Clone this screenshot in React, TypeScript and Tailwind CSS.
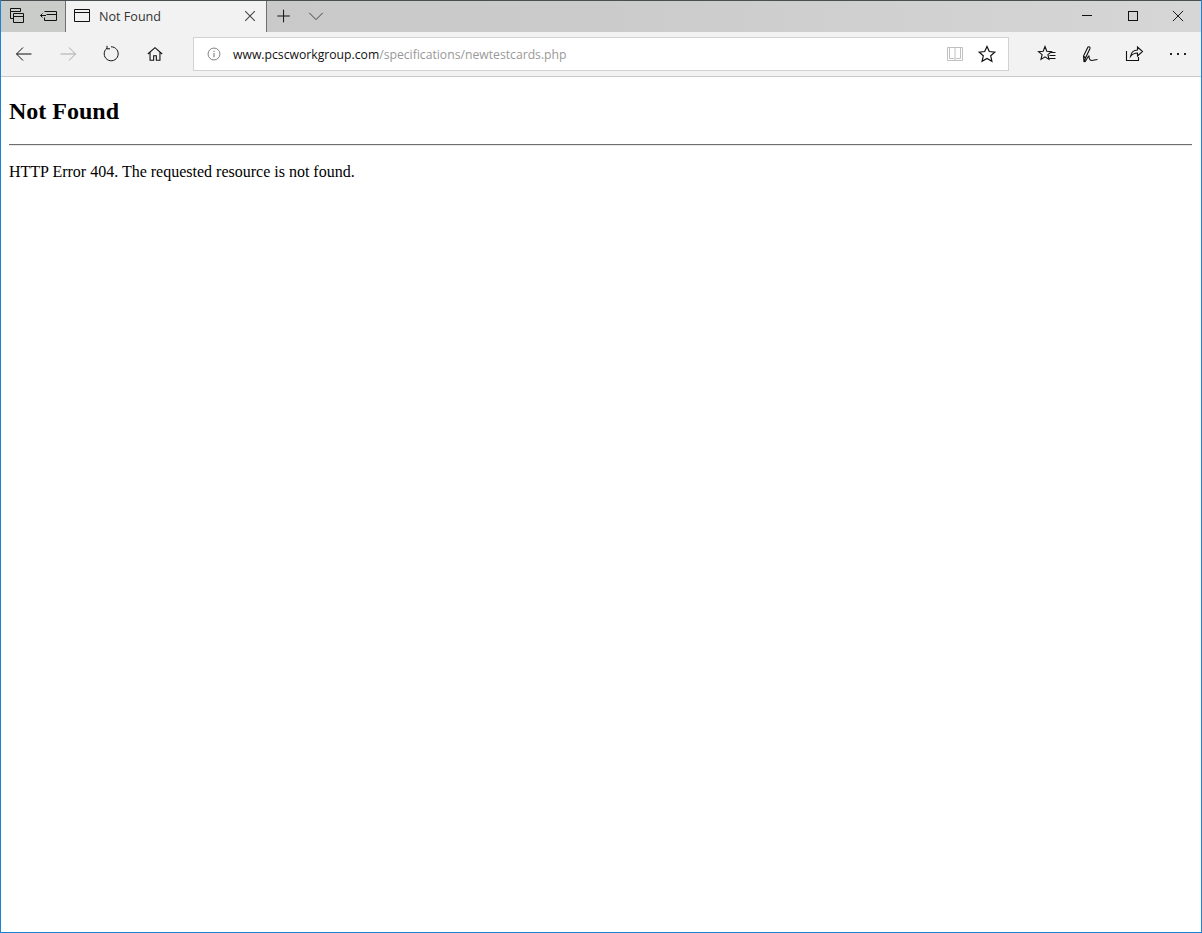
import type { ReactNode } from "react";

const Icon = ({ children, size = 20 }: { children: ReactNode; size?: number }) => (
  <svg width={size} height={size} viewBox="0 0 20 20" fill="none" stroke="currentColor" strokeWidth="1" className="block">
    {children}
  </svg>
);

const ToolButton = ({ className, children }: { className: string; children: ReactNode }) => (
  <div className={`flex h-[44px] items-center justify-center ${className}`}>{children}</div>
);

export default function App() {
  return (
    <div className="flex h-[933px] w-[1202px] flex-col overflow-hidden border-x border-b border-x-[#1883d7] border-b-[#1883d7] bg-white font-['Open_Sans',sans-serif]">
      <div className="h-px -mx-px shrink-0 bg-[#4a4f52]" />

      {/* Tab strip */}
      <div className="flex h-[31px] shrink-0 bg-gradient-to-r from-[#c8c8c8] via-[#cbcbcb] to-[#d6d6d6] text-[#111]">
        <div className="flex w-[64px] shrink-0 bg-[#c9ccc9] pb-[2px]">
          <div className="flex w-[31px] items-center justify-center">
            <Icon>
              <path d="M3.5 2.5h10v3h-10zM3.5 5.5v7h3M6.5 7.5h10v9h-10zM6.5 10.5h10" />
            </Icon>
          </div>
          <div className="flex w-[33px] items-center justify-center">
            <Icon>
              <path d="M5.5 5.5h12v9h-12v-3M17.5 8.5h-10M7 9.5H1.5M3.5 7.5l-2 2 2 2" />
            </Icon>
          </div>
        </div>
        <div className="flex w-[202px] shrink-0 items-center border-x border-x-[#6e6e6e] bg-[#f2f2f2] pb-[2px]">
          <div className="ml-[7px] w-[18px]">
            <Icon>
              <path d="M1.5 3.5h15v12h-15zM1.5 6.5h15" />
            </Icon>
          </div>
          <span className="ml-[8px] pt-[2px] text-[12.6px] leading-[18px] text-[#333]">Not Found</span>
          <div className="ml-auto mr-[8px] text-[#444]">
            <Icon size={16}>
              <path d="M4 4l12 12M16 4L4 16" strokeWidth="1.3" />
            </Icon>
          </div>
        </div>
        <div className="flex w-[34px] items-center justify-center pb-[2px]">
          <Icon size={18}>
            <path d="M9.5 3v14M2.5 10h14" strokeWidth="1.1" />
          </Icon>
        </div>
        <div className="flex w-[29px] items-center justify-center pb-[2px] text-[#333]">
          <Icon size={18}>
            <path d="M2.5 6.5L10 14l7.5-7.5" />
          </Icon>
        </div>
        <div className="ml-auto flex pb-[2px]">
          <div className="flex w-[46px] items-center justify-center">
            <div className="h-px w-[10px] bg-[#111]" />
          </div>
          <div className="flex w-[45px] items-center justify-center">
            <div className="h-[10px] w-[10px] border border-[#111]" />
          </div>
          <div className="flex w-[46px] items-center justify-center">
            <Icon size={12}>
              <path d="M1.5 1.5l17 17M18.5 1.5l-17 17" strokeWidth="1.6" />
            </Icon>
          </div>
        </div>
      </div>

      {/* Address bar row */}
      <div className="flex h-[45px] shrink-0 items-center border-b border-b-[#c9c9c9] bg-[#f2f2f2] pl-px text-[#111]">
        <ToolButton className="w-[44px]">
          <Icon>
            <path d="M2.5 10h15M9 3.5L2.5 10 9 16.5" />
          </Icon>
        </ToolButton>
        <ToolButton className="w-[44px] text-[#a9a9a9]">
          <Icon>
            <path d="M2.5 10h15M11 3.5l6.5 6.5-6.5 6.5" />
          </Icon>
        </ToolButton>
        <ToolButton className="w-[44px] pl-[2px]">
          <Icon>
            <path d="M5 4.2a7 7 0 1 0 4-1.4M5 1.8v3h3" />
          </Icon>
        </ToolButton>
        <ToolButton className="w-[44px]">
          <Icon size={18}>
            <path d="M2 10l8-7 8 7M4.5 8v9h4v-5h3v5h4V8" strokeWidth="1.2" />
          </Icon>
        </ToolButton>
        <div className="ml-[16px] flex h-[34px] w-[816px] shrink-0 items-center border border-[#d2d2d2] bg-white">
          <div className="ml-[13px] text-[#777]">
            <Icon size={14}>
              <circle cx="10" cy="10" r="8.5" strokeWidth="1.3" />
              <path d="M10 8.5v6M10 5.5v1.6" strokeWidth="1.5" />
            </Icon>
          </div>
          <span className="ml-[12px] pt-px text-[12.2px] leading-[18px] text-[#111]">
            www.pcscworkgroup.com<span className="text-[#999]">/specifications/newtestcards.php</span>
          </span>
          <div className="ml-auto text-[#c0c0c0]">
            <Icon>
              <path d="M2.5 3.5h15v13h-15zM4.5 3.5v11h4a2 2 0 0 1 1.5 1 2 2 0 0 1 1.5-1h4v-11M10 4v11" />
            </Icon>
          </div>
          <div className="ml-[12px] mr-[11px]">
            <Icon>
              <path d="M10 2.5l2.3 5 5.5.6-4.1 3.7 1.2 5.5-4.9-2.8-4.9 2.8 1.2-5.5-4.1-3.7 5.5-.6z" strokeWidth="1.2" />
            </Icon>
          </div>
        </div>
        <ToolButton className="ml-[16px] w-[44px]">
          <Icon>
            <path d="M8 2.5l1.8 4.7 4.7.4-3.6 3.1 1.1 4.7L8 12.9l-4 2.5 1.1-4.7-3.6-3.1 4.7-.4zM13 8.5h5.5M12.5 11.5h6M12.5 14.5h6" strokeWidth="1.1" />
          </Icon>
        </ToolButton>
        <ToolButton className="w-[43px]">
          <Icon>
            <path d="M4 18L3.5 12 8 3c1-.5 2.5 0 2 1.5L5.5 14zM3.5 12l2 2M5 18c2-3 3.5-6.5 4-6 0 2 1 4.5 3 4.5s3-1 5.5-1" strokeWidth="1.1" />
          </Icon>
        </ToolButton>
        <ToolButton className="w-[44px] pl-[2px]">
          <Icon>
            <path d="M2.5 7v9.5h12V13M6.5 12.5c.5-4 3.5-6.5 7-6.5V3l5 4.5-5 4.5V9c-3 0-5.500 1.500-7 3.500z" strokeWidth="1.1" />
          </Icon>
        </ToolButton>
        <ToolButton className="w-[46px]">
          <div className="flex gap-[5px]">
            <div className="h-[2px] w-[2px] bg-[#222]" />
            <div className="h-[2px] w-[2px] bg-[#222]" />
            <div className="h-[2px] w-[2px] bg-[#222]" />
          </div>
        </ToolButton>
      </div>

      {/* Page */}
      <div className="flex-1 pl-[8px] pr-[9px] font-['Liberation_Serif',serif] text-black">
        <h1 className="mt-[21px] text-[24px] font-bold leading-[27px]">Not Found</h1>
        <hr className="mt-[19px] border-t border-b border-t-[#6e6e6e] border-b-[#e8e8e8]" />
        <p className="mt-[17px] text-[16px] leading-[18px]">HTTP Error 404. The requested resource is not found.</p>
      </div>
    </div>
  );
}
